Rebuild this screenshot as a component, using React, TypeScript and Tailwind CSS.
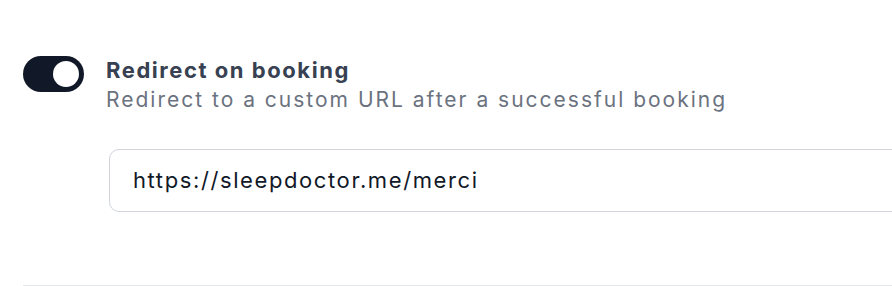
import React from "react";

export default function App() {
  return (
    <div className="w-[892px] h-[286px] overflow-hidden bg-white" style={{ fontFamily: "Inter, 'Noto Sans', sans-serif" }}>
      <div className="pl-[23px] pt-[56px]">
        <div className="flex items-start gap-[22px]">
          <button
            type="button"
            className="w-[61px] h-[36px] rounded-full bg-[#111827] flex items-center justify-end pr-[5px] shrink-0"
          >
            <span className="block w-[26px] h-[26px] rounded-full bg-white" />
          </button>
          <div className="flex flex-col">
            <div className="text-[22px] leading-[28px] font-bold tracking-[1.55px] text-[#374151]">Redirect on booking</div>
            <div className="mt-[2px] text-[21px] leading-[28px] tracking-[2px] text-[#6b7280]">
              Redirect to a custom URL after a successful booking
            </div>
          </div>
        </div>
        <div className="mt-[35px] ml-[86px] w-[900px] h-[63px] rounded-[10px] border border-[#d1d5db] flex items-center pl-[23px] text-[22px] tracking-[1.6px] text-[#111827]">
          https://sleepdoctor.me/merci
        </div>
        <div className="mt-[73px] h-px w-[900px] bg-[#e5e7eb]" />
      </div>
    </div>
  );
}
